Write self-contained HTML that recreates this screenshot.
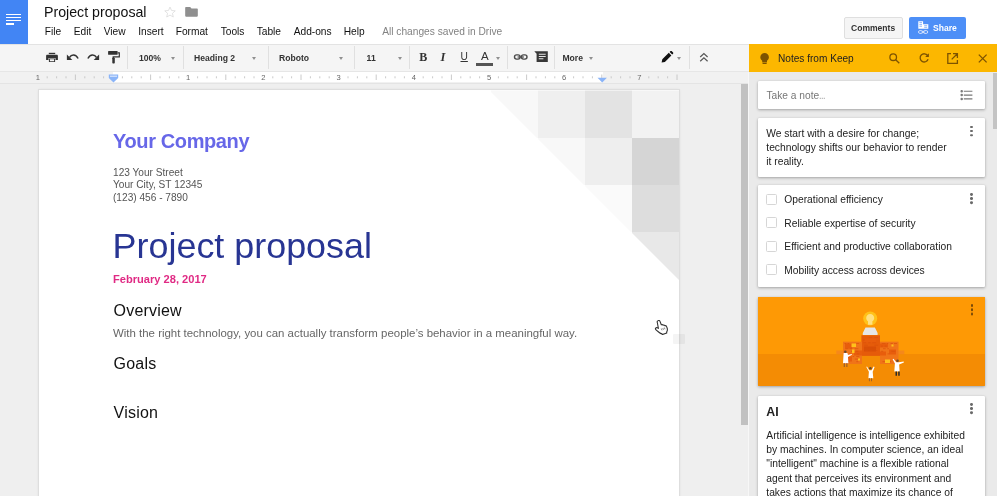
<!DOCTYPE html>
<html>
<head>
<meta charset="utf-8">
<title>Project proposal</title>
<style>
html,body{margin:0;padding:0;}
html{background:#fff;}
body{will-change:transform;}
body{width:997px;height:496px;overflow:hidden;position:relative;background:#fff;font-family:"Liberation Sans",Arial,sans-serif;color:#222;}
.abs{position:absolute;}
.t{position:absolute;white-space:nowrap;line-height:1;}
#hdr{left:0;top:0;width:997px;height:44px;background:#fff;}
#logo{left:0;top:0;width:28px;height:43.5px;background:#4285f4;}
#logo i{position:absolute;left:6px;height:1.4px;background:#fff;width:15px;}
#toolbar{left:0;top:44px;width:749px;height:27px;background:#f5f5f5;border-top:1px solid #e3e3e3;box-sizing:border-box;}
#ruler{left:0;top:71px;width:749px;height:13px;background:#f1f1f1;border-top:1px solid #e6e6e6;border-bottom:1px solid #e4e4e4;box-sizing:border-box;}
#docbg{left:0;top:84px;width:749px;height:412px;background:#efefef;}
#page{left:39px;top:90px;width:640px;height:410px;background:#fff;box-shadow:0 0 0 1px #dedede,0 0 3px rgba(0,0,0,.12);overflow:hidden;}
.menu{font-size:10.2px;top:26.5px;color:#111;}
.tb{font-size:8.6px;font-weight:bold;color:#333;top:53.6px;}
.sep{position:absolute;top:46px;width:1px;height:23px;background:#e0e0e0;}
.caret{position:absolute;top:56.5px;width:0;height:0;border-left:2.5px solid transparent;border-right:2.5px solid transparent;border-top:3px solid #909090;}
#side{left:749px;top:44px;width:248px;height:452px;background:#eaeaea;}
#keephdr{left:749px;top:44px;width:248px;height:28px;background:#fcb700;}
.card{position:absolute;left:757.7px;width:227.6px;background:#fff;box-shadow:0 1px 3px rgba(0,0,0,.3),0 0 1px rgba(0,0,0,.12);border-radius:1px;}
.note{font-size:10.28px;color:#222;}
.dots{position:absolute;width:2.8px;height:2.8px;border-radius:50%;background:#6a6a6a;box-shadow:0 4.1px 0 #6a6a6a,0 8.2px 0 #6a6a6a;}
.cb{position:absolute;left:765.5px;width:9px;height:9px;border:1px solid #d6d6d6;border-radius:1.5px;background:#fff;box-sizing:content-box;}

.doc-s{font-size:10.15px;color:#555;}
.doc-h{font-size:16px;color:#111;letter-spacing:.2px;margin-left:.6px;}
</style>
</head>
<body>
<!-- header -->
<div id="hdr" class="abs"></div>
<div id="logo" class="abs"><i style="top:13.5px"></i><i style="top:16.8px"></i><i style="top:20.1px"></i><i style="top:23.4px;width:8px"></i></div>
<div class="t" style="left:44px;top:4.9px;font-size:14.2px;color:#111;">Project proposal</div>
<svg class="abs" style="left:163px;top:4.6px" width="14" height="14" viewBox="0 0 24 24"><path d="M12 3.5l2.6 5.9 6.4.6-4.8 4.3 1.4 6.3L12 17.3 6.4 20.6l1.4-6.3L3 10l6.4-.6z" fill="none" stroke="#dedede" stroke-width="1.5"/></svg>
<svg class="abs" style="left:185px;top:5.8px" width="13" height="11.4" viewBox="0 0 14 12" preserveAspectRatio="none"><path d="M1 1h4.6l1.4 1.6H13a.8.8 0 0 1 .8.8V10.4a.8.8 0 0 1-.8.8H1a.8.8 0 0 1-.8-.8V1.8A.8.8 0 0 1 1 1z" fill="#8f8f8f"/></svg>
<div class="t menu" style="left:44.7px;">File</div>
<div class="t menu" style="left:73.7px;">Edit</div>
<div class="t menu" style="left:103.7px;">View</div>
<div class="t menu" style="left:138.2px;">Insert</div>
<div class="t menu" style="left:175.7px;">Format</div>
<div class="t menu" style="left:220.7px;">Tools</div>
<div class="t menu" style="left:256.7px;">Table</div>
<div class="t menu" style="left:293.7px;">Add-ons</div>
<div class="t menu" style="left:343.7px;">Help</div>
<div class="t menu" style="left:382.2px;color:#828282;">All changes saved in Drive</div>

<!-- comments/share -->
<div class="abs" style="left:844px;top:17px;width:59px;height:22px;box-sizing:border-box;border:1px solid #dfdfdf;border-radius:2px;background:#f5f5f5;"></div>
<div class="t" style="left:851px;top:23.6px;font-size:8.55px;font-weight:bold;color:#333;">Comments</div>
<div class="abs" style="left:909px;top:17px;width:57px;height:22px;border-radius:2px;background:#4d8ff7;"></div>
<div class="t" style="left:933px;top:23.6px;font-size:8.55px;font-weight:bold;color:#fff;">Share</div>

<!-- toolbar -->
<div id="toolbar" class="abs"></div>
<div class="sep" style="left:127px"></div>
<div class="sep" style="left:183px"></div>
<div class="sep" style="left:268px"></div>
<div class="sep" style="left:354px"></div>
<div class="sep" style="left:409px"></div>
<div class="sep" style="left:507px"></div>
<div class="sep" style="left:554px"></div>
<div class="sep" style="left:689px"></div>
<div class="t tb" style="left:139px;">100%</div><div class="caret" style="left:171px"></div>
<div class="t tb" style="left:194px;">Heading 2</div><div class="caret" style="left:252px"></div>
<div class="t tb" style="left:279px;">Roboto</div><div class="caret" style="left:339px"></div>
<div class="t tb" style="left:366.6px;">11</div><div class="caret" style="left:398.2px"></div>
<div class="t tb" style="left:562.4px;">More</div><div class="caret" style="left:588.5px"></div>
<div class="caret" style="left:677px"></div>
<div class="caret" style="left:496px"></div>


<svg class="abs" style="left:40px;top:46px" width="90" height="24" viewBox="0 0 90 24">
<g fill="#333">
<rect x="8.8" y="6.8" width="6.4" height="1.3"/>
<path d="M7.2 8.8h9.6c.6 0 1.1.5 1.1 1.1v4.1h-2.4v-2h-7v2H6.1V9.9c0-.6.5-1.1 1.1-1.1z"/>
<path d="M8.9 12.4h6.2v3.7H8.9zM9.9 13.3v1.9h4.2v-1.9z"/>
<path d="M26.9 8.6v5.4h5.4z"/><path d="M29.6 11.4C31.2 8.3 35.6 7.6 38.1 12.5" fill="none" stroke="#333" stroke-width="1.5"/>
<path d="M59.1 8.6v5.4h-5.4z"/><path d="M56.4 11.4C54.8 8.3 50.4 7.6 47.9 12.5" fill="none" stroke="#333" stroke-width="1.5"/>
<rect x="68.1" y="5" width="9.5" height="3.8" rx=".6"/>
<path d="M77.6 6.3h2.3v5.2h-6v1.2h-1.3v-2.4h6.1V7.5h-1.1z"/>
<rect x="72.3" y="11.5" width="2.5" height="6.1" rx=".8"/>
</g>
</svg>
<div class="t" style="left:419.3px;top:50.9px;font-family:'Liberation Serif',serif;font-weight:bold;font-size:12px;color:#333;">B</div>
<div class="t" style="left:440.5px;top:50.9px;font-family:'Liberation Serif',serif;font-weight:bold;font-style:italic;font-size:12.5px;color:#333;">I</div>
<div class="t" style="left:460.5px;top:52.3px;font-size:10.2px;color:#333;text-decoration:underline;">U</div>
<div class="t" style="left:481px;top:51px;font-size:11.5px;color:#333;">A</div>
<div class="abs" style="left:476px;top:63px;width:17px;height:2.6px;background:#555;"></div>
<svg class="abs" style="left:512px;top:50px" width="38" height="14" viewBox="0 0 38 14">
<g fill="none" stroke="#4a4a4a" stroke-width="1.4"><rect x="2.5" y="4.9" width="5.6" height="4.2" rx="2.1"/><rect x="9.4" y="4.9" width="5.6" height="4.2" rx="2.1"/><path d="M5.6 7h6.3" stroke-width="1.2"/></g>
<path d="M22.3 1.2h13.5v10.7H24.6V3.7z" fill="#383838"/>
<path d="M26.8 4.3h6.9M26.8 6.5h6.9M26.8 8.7h4.6" stroke="#e6e6e6" stroke-width="1.1"/>
</svg>
<svg class="abs" style="left:660px;top:50px" width="14" height="14" viewBox="0 0 14 14"><path d="M1.6 12.6l.7-3.3 6.5-6.5 2.6 2.6-6.5 6.5zM9.6 2l.9-.9c.3-.3.8-.3 1.1 0l1.5 1.5c.3.3.3.8 0 1.1l-.9.9z" fill="#111"/></svg>
<svg class="abs" style="left:699px;top:52px" width="10" height="11" viewBox="0 0 10 11"><path d="M1.2 5l3.7-3.4L8.6 5M1.2 9.3l3.7-3.4 3.7 3.4" fill="none" stroke="#555" stroke-width="1.2"/></svg>
<!-- share icon -->
<svg class="abs" style="left:917px;top:20px" width="13" height="15" viewBox="0 0 13 15">
<path d="M1.3 1.2h4.8v3h5.2v4.6H1.3z" fill="#fff"/>
<path d="M2.4 2.6h2.6M2.4 4.4h2.6M2.4 6.2h2.6M7.2 5.7h3M7.2 7.3h3" stroke="#6ea3f7" stroke-width=".8"/>
<g fill="none" stroke="#dbe7fd" stroke-width=".9"><rect x="1.5" y="10.6" width="4.3" height="2.8" rx="1.4"/><rect x="6.4" y="10.6" width="4.3" height="2.8" rx="1.4"/><path d="M4.3 12h3.6"/></g>
</svg>
<!-- ruler -->
<div id="ruler" class="abs"></div>
<div class="abs" style="left:113px;top:72px;width:490px;height:10px;background:#fff;"></div>

<svg class="abs" style="left:0;top:71px;font-family:'Liberation Sans',sans-serif" width="749" height="12" viewBox="0 0 749 12"><path d="M47.2 5.3v2M56.6 5.3v2M66.0 5.3v2M75.4 3.5v5.5M84.8 5.3v2M94.2 5.3v2M103.6 5.3v2M122.4 5.3v2M131.8 5.3v2M141.2 5.3v2M150.6 3.5v5.5M160.0 5.3v2M169.4 5.3v2M178.8 5.3v2M197.6 5.3v2M207.0 5.3v2M216.4 5.3v2M225.8 3.5v5.5M235.2 5.3v2M244.6 5.3v2M254.0 5.3v2M272.8 5.3v2M282.2 5.3v2M291.6 5.3v2M301.0 3.5v5.5M310.4 5.3v2M319.8 5.3v2M329.2 5.3v2M348.0 5.3v2M357.4 5.3v2M366.8 5.3v2M376.2 3.5v5.5M385.6 5.3v2M395.0 5.3v2M404.4 5.3v2M423.2 5.3v2M432.6 5.3v2M442.0 5.3v2M451.4 3.5v5.5M460.8 5.3v2M470.2 5.3v2M479.6 5.3v2M498.4 5.3v2M507.8 5.3v2M517.2 5.3v2M526.6 3.5v5.5M536.0 5.3v2M545.4 5.3v2M554.8 5.3v2M573.6 5.3v2M583.0 5.3v2M592.4 5.3v2M601.8 3.5v5.5M611.2 5.3v2M620.6 5.3v2M630.0 5.3v2M648.8 5.3v2M658.2 5.3v2M667.6 5.3v2M677.0 3.5v5.5" stroke="#c4c4c4" stroke-width=".9" fill="none"/><text x="37.8" y="9" font-size="7.6" fill="#666" text-anchor="middle">1</text><text x="188.2" y="9" font-size="7.6" fill="#666" text-anchor="middle">1</text><text x="263.4" y="9" font-size="7.6" fill="#666" text-anchor="middle">2</text><text x="338.6" y="9" font-size="7.6" fill="#666" text-anchor="middle">3</text><text x="413.8" y="9" font-size="7.6" fill="#666" text-anchor="middle">4</text><text x="489.0" y="9" font-size="7.6" fill="#666" text-anchor="middle">5</text><text x="564.2" y="9" font-size="7.6" fill="#666" text-anchor="middle">6</text><text x="639.4" y="9" font-size="7.6" fill="#666" text-anchor="middle">7</text><path d="M108.8 3.5h9.4v3.4l-4.7 4.7l-4.7-4.7z" fill="#8ab4f8"/><path d="M110 5.2h7" stroke="#fff" stroke-width=".8"/><path d="M597.5 6.7h9.4l-4.7 4.8z" fill="#8ab4f8"/></svg>
<!-- doc -->
<div id="docbg" class="abs"></div>
<div id="page" class="abs"></div>


<!-- corner art -->
<svg class="abs" style="left:38px;top:90.6px;overflow:visible" width="641" height="200" viewBox="0 0 641 200">
<defs><clipPath id="tri"><path d="M451.4 -.6H641V189z"/></clipPath></defs>
<g clip-path="url(#tri)">
<rect x="453" y="-1" width="47" height="48" fill="#f8f8f8"/>
<rect x="500" y="-1" width="47" height="48" fill="#efefef"/>
<rect x="547" y="-1" width="47" height="48" fill="#e3e3e3"/>
<rect x="594" y="-1" width="47" height="48" fill="#f2f2f2"/>
<rect x="500" y="47" width="47" height="47" fill="#f8f8f8"/>
<rect x="547" y="47" width="47" height="47" fill="#eeeeee"/>
<rect x="594" y="47" width="47" height="47" fill="#d5d5d5"/>
<rect x="547" y="94" width="47" height="47" fill="#fafafa"/>
<rect x="594" y="94" width="47" height="47" fill="#dddddd"/>
<rect x="594" y="141" width="47" height="48" fill="#e8e8e8"/>
</g>
</svg>
<div class="t" style="left:113px;top:130.6px;font-size:20px;letter-spacing:-.38px;font-weight:bold;color:#6767e8;">Your Company</div>
<div class="t doc-s" style="left:113px;top:168px;">123 Your Street</div>
<div class="t doc-s" style="left:113px;top:179.6px;">Your City, ST 12345</div>
<div class="t doc-s" style="left:113px;top:193px;">(123) 456 - 7890</div>
<div class="t" style="left:112.6px;top:228.5px;font-size:35.9px;color:#283593;">Project proposal</div>
<div class="t" style="left:113px;top:274.3px;font-size:11.1px;font-weight:bold;color:#e02a84;">February 28, 2017</div>
<div class="t doc-h" style="left:113px;top:302.5px;">Overview</div>
<div class="t" style="left:113px;top:328px;font-size:11.45px;color:#666;">With the right technology, you can actually transform people’s behavior in a meaningful way.</div>
<div class="t doc-h" style="left:113px;top:355.7px;">Goals</div>
<div class="t doc-h" style="left:113px;top:405.4px;">Vision</div>
<!-- cursor + faint bubble -->
<div class="abs" style="left:673px;top:334px;width:12px;height:10px;background:rgba(0,0,0,.045);border-radius:1px;"></div>
<svg class="abs" style="left:654px;top:319px" width="15" height="16" viewBox="0 0 15 16">
<path d="M4.2 1.6c.7-.3 1.5 0 1.8.8l1.3 3.4.3-.1c.6-.2 1.2 0 1.6.5.6-.3 1.3-.1 1.7.5.7-.2 1.4.2 1.7.9l.6 1.7c.4 1.2.2 2.2-.3 3.3l-.3.7.2.6-4.5 1.7-.300-.7c-1.2-.3-2.1-.9-3.1-1.7L2 10.8c-.6-.5-.7-1.2-.3-1.7.4-.5 1.1-.6 1.7-.3l1 .6L3.3 3.5c-.3-.8.1-1.6.9-1.9z" fill="#fff" stroke="#333" stroke-width="1.1" stroke-linejoin="round"/>
<path d="M7.3 9.5l.7 1.8M8.8 9l.7 1.8M10.3 8.5l.7 1.8" stroke="#555" stroke-width=".7" fill="none"/>
</svg>
<!-- doc scrollbar -->
<div class="abs" style="left:748px;top:72px;width:1px;height:424px;background:#f7f7f7;"></div>
<div class="abs" style="left:741px;top:84px;width:7px;height:341px;background:#c1c1c1;"></div>
<!-- side -->
<div id="side" class="abs"></div>
<div id="keephdr" class="abs"></div>
<!-- keep header icons -->
<svg class="abs" style="left:749px;top:44px" width="248" height="29" viewBox="0 0 248 29">
<g fill="#7d5300">
<path d="M15.6 9c-2.4 0-4.3 1.9-4.3 4.2 0 1.5.8 2.8 1.9 3.5v1.2c0 .3.3.6.6.6h3.6c.3 0 .6-.3.6-.6v-1.2c1.1-.7 1.9-2 1.9-3.5C19.9 10.9 18 9 15.6 9z"/>
<rect x="13.5" y="19" width="4.2" height="1" rx=".3"/>
</g>
<g fill="none" stroke="#7d5300" stroke-width="1.3">
<circle cx="144.2" cy="13.2" r="3.3"/><path d="M146.7 15.7l3.6 3.6"/>
<path d="M178.6 11.5a4.1 4.1 0 1 0 .5 3.8"/>
<path d="M198.6 9.6h-0" />
<path d="M202 9.7h-3.2v9.6h9.6v-3.2M204 9.7h4.4v4.4M208.3 9.8l-5.6 5.6"/>
<path d="M229.8 10.6l7.8 7.8M237.6 10.6l-7.8 7.8"/>
</g>
<path d="M179.9 9.2v3.7h-3.7z" fill="#7d5300"/>
</svg>
<div class="t" style="left:778px;top:53.5px;font-size:10.1px;color:#222;">Notes from Keep</div>
<!-- side scrollbar -->
<div class="abs" style="left:993px;top:72.5px;width:4px;height:56px;background:#c4c4c4;"></div>
<!-- card 1 -->
<div class="card" style="top:81px;height:28px;"></div>
<div class="t" style="left:766.5px;top:90.6px;font-size:10.2px;color:#777;">Take a note<span style="display:inline-block;transform:scaleX(.62);transform-origin:0 0">…</span></div>
<svg class="abs" style="left:960px;top:89px" width="14" height="12" viewBox="0 0 14 12"><g stroke="#777" stroke-width="1.1" fill="none"><path d="M3.8 2.3h8.6M3.8 6.1h8.6M3.8 9.9h8.6"/><circle cx="1.7" cy="2.3" r=".7"/><circle cx="1.7" cy="6.1" r=".7"/><circle cx="1.7" cy="9.9" r=".7"/></g></svg>
<!-- card 2 -->
<div class="card" style="top:118.2px;height:59px;"></div>
<div class="t note" style="left:766.3px;top:129px;">We start with a desire for change;</div>
<div class="t note" style="left:766.3px;top:143px;">technology shifts our behavior to render</div>
<div class="t note" style="left:766.3px;top:157px;">it reality.</div>
<div class="dots" style="left:970.2px;top:125.6px;"></div>
<!-- card 3 -->
<div class="card" style="top:185.4px;height:102px;"></div>
<div class="cb" style="top:193.5px;"></div><div class="t note" style="left:784.3px;top:195px;">Operational efficiency</div>
<div class="cb" style="top:217px;"></div><div class="t note" style="left:784.3px;top:219px;">Reliable expertise of security</div>
<div class="cb" style="top:240.5px;"></div><div class="t note" style="left:784.3px;top:242px;">Efficient and productive collaboration</div>
<div class="cb" style="top:264px;"></div><div class="t note" style="left:784.3px;top:266px;">Mobility access across devices</div>
<div class="dots" style="left:970.2px;top:192.8px;"></div>
<!-- card 4 image -->
<div class="card" style="top:297.2px;height:89px;background:#ff9800;overflow:hidden;" id="imgcard">
<svg class="abs" style="left:0;top:0" width="228" height="89" viewBox="758 297.5 228 89">
<rect x="758" y="297.5" width="228" height="57" fill="#fe9905"/>
<rect x="758" y="354.5" width="228" height="32" fill="#f48c04"/>
<rect x="836.3" y="351" width="68" height="3.8" fill="#f5881a"/>
<circle cx="870.2" cy="319" r="7" fill="#ffc21a"/>
<path d="M870.2 314.5c-2.4 0-4 1.8-4 3.9 0 1.5.9 2.6 1.8 3.4v3.4h4.4v-3.4c.9-.8 1.8-1.9 1.8-3.4 0-2.1-1.6-3.9-4-3.9z" fill="#ffe082"/>
<path d="M865.5 328h9.4l2.6 5.2c.2.4.2 2.4 0 2.4h-14.6c-.2 0-.2-2 0-2.4z" fill="#e6e6e6"/>
<rect x="861.4" y="335.7" width="18.6" height="20.7" fill="#e55b0a"/>
<rect x="843" y="342.2" width="19" height="22.3" fill="#f07418"/>
<rect x="880" y="342.2" width="18.5" height="22.3" fill="#f07418"/>
<g fill="#e85d0c"><rect x="845" y="344" width="7" height="5"/><rect x="854" y="351" width="8" height="5"/><rect x="846" y="357" width="6" height="5"/><rect x="880" y="344" width="8" height="4"/><rect x="889" y="350" width="7" height="5"/><rect x="880" y="352" width="6" height="4"/><rect x="864" y="339" width="12" height="4"/><rect x="864" y="347" width="12" height="5" fill="#d94f06"/></g>
<path d="M844.5 344.0h1.8M847.5 344.0h1.7M856.3 344.0h2.8M845.2 349.2h3.2M849.7 349.2h2.7M854.7 349.2h3.7M851.0 351.8h2.8M855.7 351.8h2.6M845.6 354.4h1.6M849.2 354.4h2.2M856.7 354.4h2.5M852.5 357.0h1.7M856.3 357.0h3.0M844.4 359.6h2.6M854.9 359.6h3.9M845.9 362.2h3.4M856.3 362.2h2.0M881.8 344.0h3.9M886.7 344.0h1.6M890.5 344.0h2.4M894.0 344.0h3.0M881.1 346.6h1.6M884.8 346.6h1.9M883.0 349.2h2.7M887.3 349.2h1.6M881.1 351.8h2.1M891.3 351.8h4.0M887.5 354.4h1.7M882.5 362.2h3.8M887.3 362.2h3.8M868.9 338.0h3.2M874.5 338.0h3.4M863.1 340.6h1.6M863.2 343.2h2.9M868.2 343.2h2.3M872.2 343.2h3.9M864.2 345.8h3.7M874.4 345.8h3.7M868.5 348.4h3.7M873.4 348.4h2.7M864.8 351.0h3.3M869.6 351.0h2.9M874.5 351.0h2.7" stroke="#d9500a" stroke-width=".9" fill="none" opacity=".75"/><g fill="#ffc21a"><rect x="851.5" y="344" width="4.5" height="3.5"/><rect x="852" y="350" width="2.5" height="3.5"/><rect x="885" y="360" width="5" height="3.5"/><rect x="891.5" y="345" width="2" height="2"/><rect x="858" y="359" width="2" height="2"/></g>
<!-- people -->
<g fill="#fff">
<path d="M843.6 353.4h3.8l.6 2.2 3.6-1.2.4.9-4 2.1.4 6.3h-5.4z"/>
<path d="M866.2 367.3l1 0 2 3.4h2.4l2-3.6 1 .4-1.9 4.7.6 6.5h-4.9l.5-6.5z"/>
<path d="M892.6 359.8l.9-.5 2.8 3.5h2.6l4.8-.9.2 1-4.8 2 .5 7.2h-5.3l.6-8z"/>
</g>
<g fill="#6b4a2a"><circle cx="845.3" cy="352.3" r="1.3"/><circle cx="870.4" cy="368.8" r="1.3"/><circle cx="897.5" cy="361.3" r="1.3"/>
<path d="M843.7 363.7h1.3v3.8h-1.3zM846.2 363.7h1.3v3.8h-1.3zM868.9 378.7h1v3h-1zM871 378.7h1v3h-1z" fill="#a0622a"/>
<path d="M895.5 372.1h1.5v4.2h-1.5zM898.2 372.1h1.5v4.2h-1.5z" fill="#2a2a2a"/></g>
</svg>
</div>
<div class="dots" style="left:970.6px;top:304.4px;background:#7a4a08;box-shadow:0 4.2px 0 #7a4a08,0 8.4px 0 #7a4a08;width:2.2px;height:2.2px"></div>
<!-- card 5 -->
<div class="card" style="top:396px;height:110px;"></div>
<div class="t" style="left:766.3px;top:405.8px;font-size:12.3px;font-weight:bold;color:#222;">AI</div>
<div class="dots" style="left:970.2px;top:402.9px;"></div>
<div class="t note" style="left:766.3px;top:431px;">Artificial intelligence is intelligence exhibited</div>
<div class="t note" style="left:766.3px;top:445px;">by machines. In computer science, an ideal</div>
<div class="t note" style="left:766.3px;top:459px;">"intelligent" machine is a flexible rational</div>
<div class="t note" style="left:766.3px;top:474px;">agent that perceives its environment and</div>
<div class="t note" style="left:766.3px;top:488px;">takes actions that maximize its chance of</div>

</body>
</html>
